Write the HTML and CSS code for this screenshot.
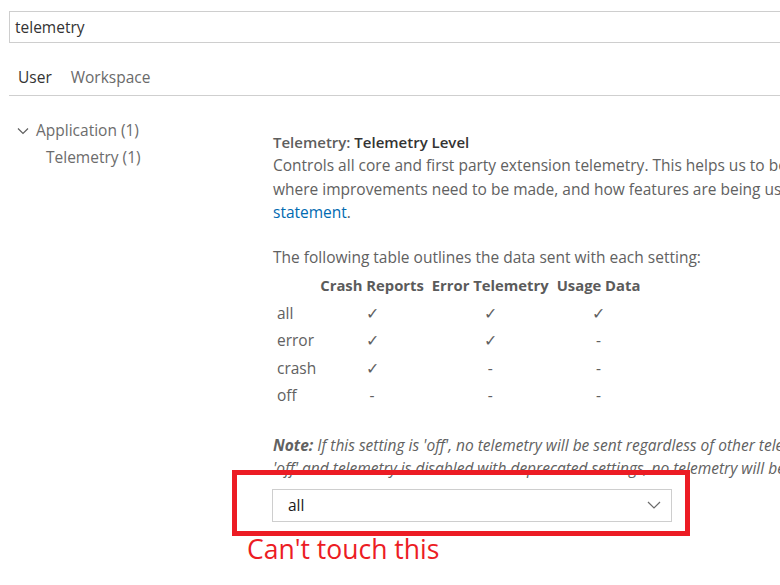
FILE: index.html
```html
<!DOCTYPE html>
<html lang="en">
<head>
  <meta charset="UTF-8">
  <title>Settings - telemetry</title>
  <link rel="stylesheet" href="styles.css">
</head>
<body>
  <div class="page">
    <div class="search">telemetry</div>
    <div class="tabs">
      <span class="tab active">User</span>
      <span class="tab">Workspace</span>
    </div>
    <div class="main">
      <div class="toc">
        <div class="toc-group">
          <svg class="chev" width="12" height="8" viewBox="0 0 12 8"><path d="M1 1.5 L6 6.5 L11 1.5" fill="none" stroke="#5f5f5f" stroke-width="1.2"/></svg>
          <span>Application (1)</span>
        </div>
        <div class="toc-item">Telemetry (1)</div>
      </div>
      <div class="setting">
        <div class="setting-title"><span class="cat">Telemetry: </span><span class="name">Telemetry Level</span></div>
        <div class="desc">
          <p>Controls all core and first party extension telemetry. This helps us to better understand how Visual Studio Code is performing,<br>where improvements need to be made, and how features are being used. Read more about the data we collect and our <a href="#">privacy</a><br><a href="#">statement</a>.</p>
          <p class="table-intro">The following table outlines the data sent with each setting:</p>
          <table class="levels">
            <tr><th></th><th>Crash Reports</th><th>Error Telemetry</th><th>Usage Data</th></tr>
            <tr><td>all</td><td>✓</td><td>✓</td><td>✓</td></tr>
            <tr><td>error</td><td>✓</td><td>✓</td><td>-</td></tr>
            <tr><td>crash</td><td>✓</td><td>-</td><td>-</td></tr>
            <tr><td>off</td><td>-</td><td>-</td><td>-</td></tr>
          </table>
          <p class="note"><em><strong>Note:</strong> If this setting is 'off', no telemetry will be sent regardless of other telemetry settings. If this is set to<br>'off' and telemetry is disabled with deprecated settings, no telemetry will be sent.</em></p>
        </div>
        <div class="select">
          <span>all</span>
          <svg width="14" height="8" viewBox="0 0 14 8"><path d="M1 1 L7 7 L13 1" fill="none" stroke="#6b6b6b" stroke-width="1.2"/></svg>
        </div>
      </div>
    </div>
  </div>
  <div class="mark-box"></div>
  <div class="mark-text">Can't touch this</div>
</body>
</html>
```

FILE: styles.css
```css
html, body { margin: 0; padding: 0; overflow: hidden; background: #fff; }
body { font-family: "Open Sans", "Noto Sans", Arial, sans-serif; font-size: 15px; color: #616161; }
.page { width: 1200px; position: relative; }

.search { margin: 11px 0 0 9px; height: 32px; box-sizing: border-box; border: 1px solid #cecece; padding: 0 5px; line-height: 30px; color: #333; font-size: 15.5px; }

.tabs { margin-left: 9px; padding: 23px 0 7px 9px; border-bottom: 1px solid #cfcfcf; display: flex; gap: 19px; line-height: 22px; font-size: 15.5px; }
.tab { color: #6a6a6a; }
.tab.active { color: #333; }

.main { display: flex; }
.toc { width: 273px; flex: none; padding: 21px 0 0 17px; box-sizing: border-box; line-height: 27px; color: #6c6c6c; font-size: 15.5px; }
.toc-group { display: flex; align-items: center; gap: 7px; }
.chev { flex: none; }
.toc-item { padding-left: 29px; }

.setting { padding-top: 34px; }
.setting-title { line-height: 24px; font-weight: 600; }
.setting-title .cat { color: #5e5e5e; }
.setting-title .name { color: #333; }
.desc { line-height: 23.5px; white-space: nowrap; font-size: 15.5px; }
.desc p { margin: 0; }
.desc a { color: #006ab1; text-decoration: none; }
.desc .table-intro { margin-top: 21px; }

.levels { border-collapse: collapse; margin-top: 3px; font-size: 14.8px; }
.levels th, .levels td { padding: 2px 4px; line-height: 23.5px; text-align: center; }
.levels th { font-weight: 700; color: #5b5b5b; }
.levels td { font-size: 15.5px; }
.levels td:first-child { text-align: left; padding-right: 0; }

.desc .note { margin-top: 24px; }
.note strong { font-weight: 700; }

.select { margin: 8px 0 0 -1px; width: 400px; height: 33px; box-sizing: border-box; border: 1px solid #cecece; display: flex; align-items: center; justify-content: space-between; padding: 0 10px 0 15px; color: #1a1a1a; font-size: 15.5px; }

.mark-box { position: absolute; left: 232px; top: 470px; width: 458px; height: 66px; box-sizing: border-box; border: 5px solid #ec1c24; }
.mark-text { position: absolute; left: 247px; top: 531px; font-size: 26.5px; line-height: 36px; color: #ec1c24; }
```
